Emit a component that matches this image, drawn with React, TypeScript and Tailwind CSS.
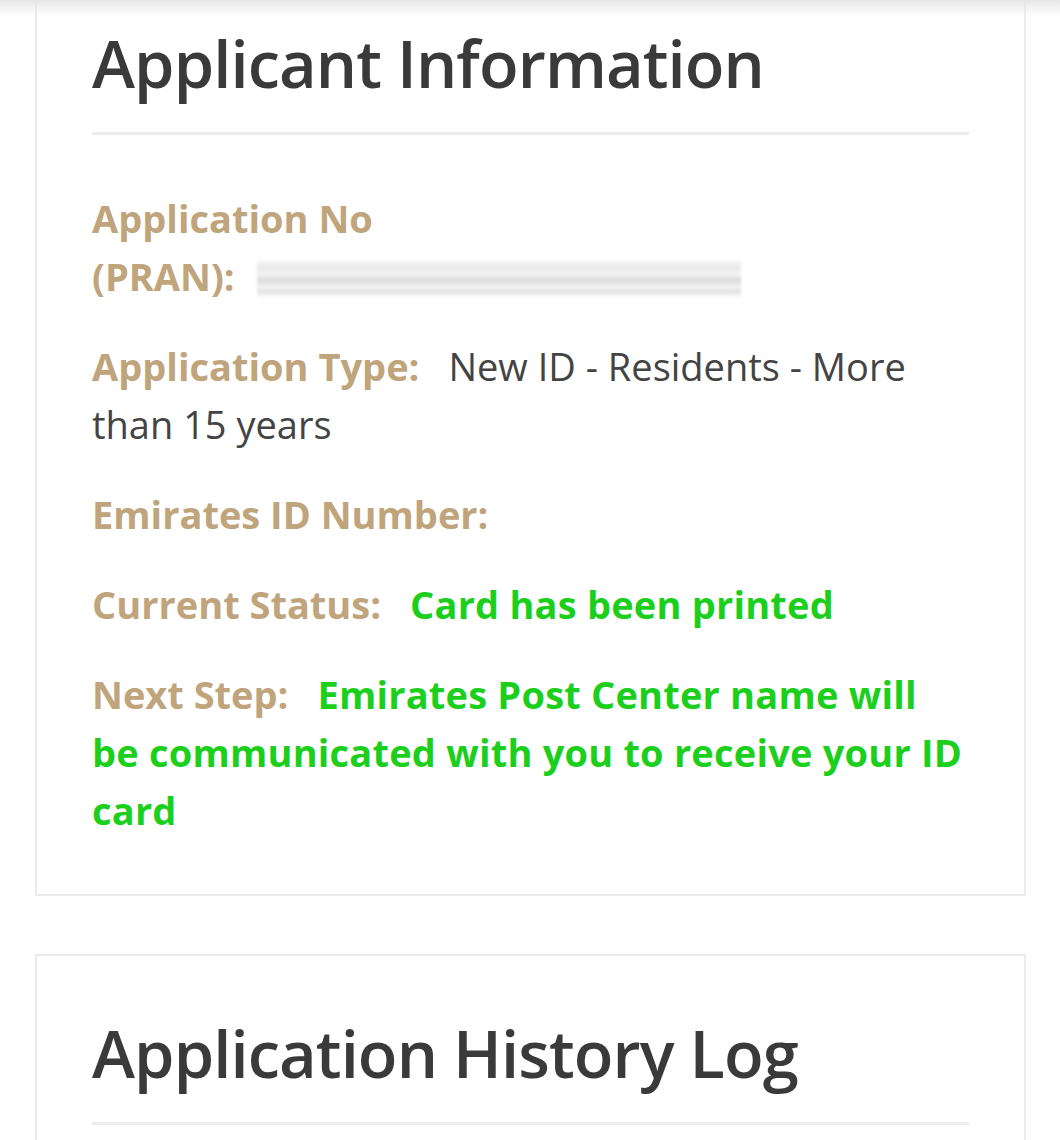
import React from "react";

const label = "font-bold text-[#bfa47c]";
const green = "font-bold text-[#1dcf1d] tracking-[0.2px]";

export default function App() {
  return (
    <div className="relative w-[1060px] min-h-[1140px] bg-white overflow-hidden" style={{ fontFamily: '"Open Sans", "Noto Sans", sans-serif' }}>
      <div className="pointer-events-none absolute left-0 top-0 h-[16px] w-full bg-gradient-to-b from-[#e6e6e6] to-transparent" />
      <div className="-mt-[36px] flex flex-col gap-[58px] pl-[35px] pr-[34px]">
        <section className="border-2 border-[#ebebeb] px-[55px] pt-[57px] pb-[55px]">
          <h2 className="text-[65px] leading-[80px] font-semibold text-[#3a3a3a] tracking-[-0.9px]">Applicant Information</h2>
          <div className="mt-[29px] h-[3px] bg-[#ececec]" />
          <div className="mt-[54px] flex flex-col gap-[32px] text-[38px] leading-[58px] text-[#444]">
            <p>
              <span className={label}>Application No<br />(PRAN):</span>
              <span className="ml-[22px] inline-block h-[38px] w-[484px] align-[-6px] rounded-sm bg-[linear-gradient(to_bottom,#fcfcfc_0%,#e8e8e8_22%,#f4f4f4_40%,#dadada_55%,#f2f2f2_75%,#e0e0e0_85%,#fafafa_100%)] blur-[1.5px]" />
            </p>
            <p>
              <span className={label}>Application Type:</span>
              <span className="ml-[29px]">New ID - Residents - More than 15 years</span>
            </p>
            <p>
              <span className={label}>Emirates ID Number:</span>
            </p>
            <p>
              <span className={label}>Current Status:</span>
              <span className={"ml-[29px] " + green}>Card has been printed</span>
            </p>
            <p>
              <span className={label}>Next Step:</span>
              <span className={"ml-[29px] " + green}>Emirates Post Center name will be communicated with you to receive your ID card</span>
            </p>
          </div>
        </section>
        <section className="border-2 border-[#ebebeb] px-[55px] pt-[57px] pb-[52px]">
          <h2 className="text-[65px] leading-[80px] font-semibold text-[#3a3a3a] tracking-[-0.9px]">Application History Log</h2>
          <div className="mt-[29px] h-[3px] bg-[#ececec]" />
          <div className="h-[200px]" />
        </section>
      </div>
    </div>
  );
}
